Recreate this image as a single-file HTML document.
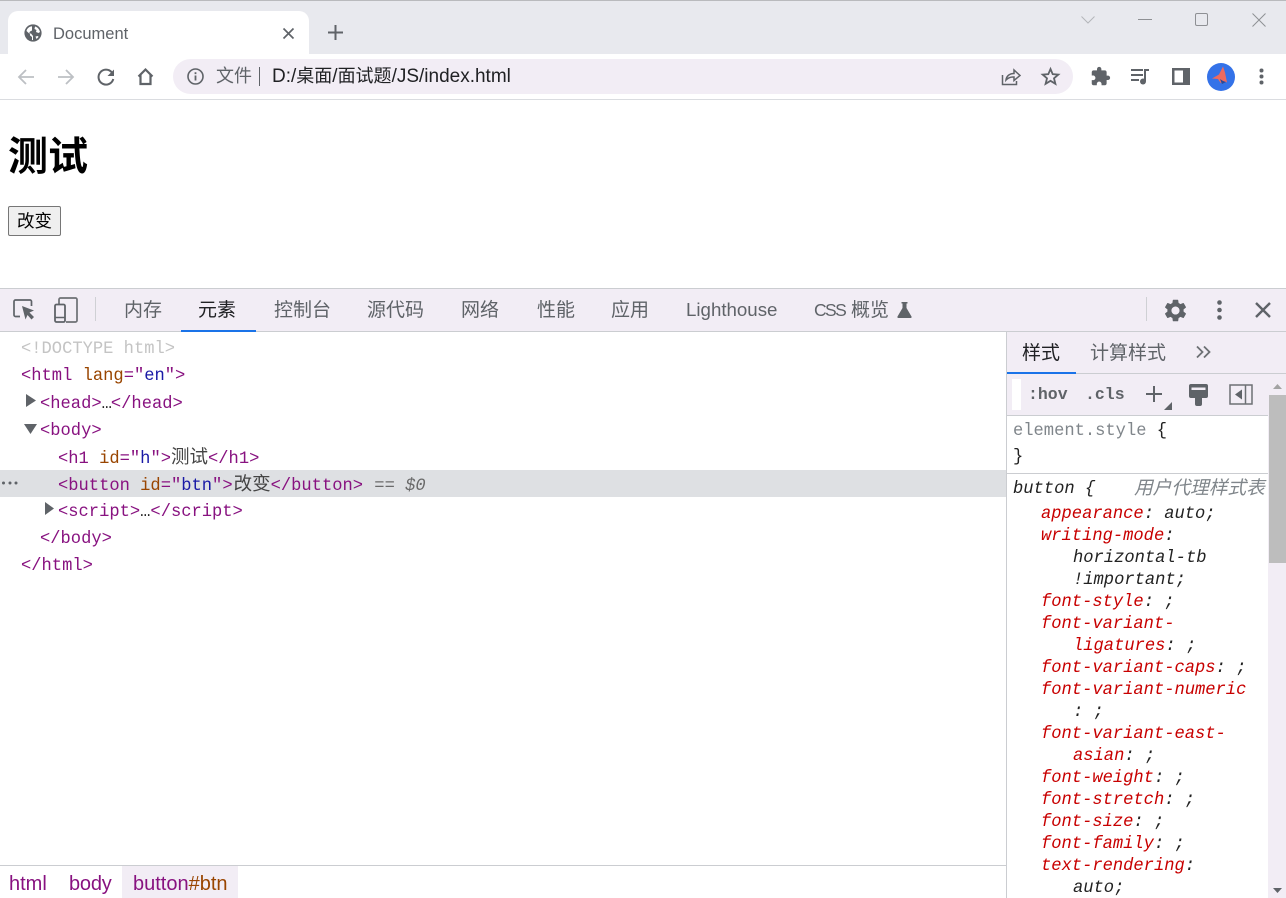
<!DOCTYPE html>
<html lang="zh"><head><meta charset="utf-8"><title>Document</title>
<style>
html,body{margin:0;padding:0;width:1286px;height:898px;overflow:hidden;background:#fff}
body{position:relative;font-family:"Liberation Sans","Noto Sans CJK SC",sans-serif}
.a{position:absolute;white-space:pre}
.m{font-family:"Liberation Mono","Noto Sans CJK SC",monospace;font-size:17.11px;line-height:27px;height:27px;color:#881280}
.m .c{font-size:18.5px;color:#444;margin-left:1px}
.m .e{color:#222;letter-spacing:-1px}
.s{font-family:"Liberation Mono","Noto Sans CJK SC",monospace;font-size:17.11px;line-height:22px;height:22px;color:#222;font-style:italic}
.n{color:#c80000}
.an{color:#994500}.av{color:#1a1aa6}
.t{font-size:19px;line-height:24px;color:#5f6368;top:299px}
.b{font-size:20px;line-height:23px;color:#881280;top:873px}
.u{font-size:18px}
svg{position:absolute;overflow:visible}
</style></head><body>

<div class="a" style="left:0;top:0;width:1286px;height:54px;background:#e8e9ee;border-top:1px solid #b9babd;box-sizing:border-box"></div>
<div class="a" style="left:8px;top:11px;width:301px;height:43px;background:#fff;border-radius:10px 10px 0 0"></div>
<svg style="left:24px;top:24px" width="18" height="18" viewBox="0 0 18 18"><circle cx="9" cy="9" r="8.6" fill="#5f6368"/><path d="M8 2.200C5 2.500 3 4.500 2.500 7l3.500 3.200v1.200l2 1.600V16c.5.1 1 .1 1 0v-4l-2-2.500H5l1-2 2-1zM11 2.500l-.5 2.500 2 1-.5 2 2.500 1 1.500-1C15.500 5.500 13.500 3 11 2.500zM11.500 12.500l1 2.500 2-2-.5-1z" fill="#fff"/></svg>
<div class="a" style="left:53px;top:24px;font-size:16.5px;line-height:20px;color:#5f6368">Document</div>
<svg style="left:283px;top:28px" width="11" height="11" viewBox="0 0 11 11"><path d="M.5.500l10 10M10.500.500l-10 10" stroke="#5f6368" stroke-width="1.700"/></svg>
<svg style="left:328px;top:25px" width="15" height="15" viewBox="0 0 15 15"><path d="M7.500 0v15M0 7.500h15" stroke="#5f6368" stroke-width="2"/></svg>

<svg style="left:1081px;top:15px" width="14" height="9" viewBox="0 0 14 9"><path d="M.5 1.500l6.500 6.500 6.500-6.500" fill="none" stroke="#b4b6ba" stroke-width="1"/></svg>
<div class="a" style="left:1138px;top:19px;width:14px;height:1px;background:#8e9094"></div>
<div class="a" style="left:1195px;top:13px;width:11px;height:11px;border:1px solid #8e9094;border-radius:2px"></div>
<svg style="left:1252px;top:13px" width="14" height="14" viewBox="0 0 14 14"><path d="M.5.500l13 13M13.500.500l-13 13" stroke="#8e9094" stroke-width="1"/></svg>

<div class="a" style="left:0;top:54px;width:1286px;height:45px;background:#fff"></div>
<div class="a" style="left:0;top:99px;width:1286px;height:1px;background:#dadce0"></div>
<svg style="left:17px;top:68px" width="18" height="18" viewBox="0 0 18 18"><path d="M17 9H2M9 2L2 9l7 7" fill="none" stroke="#bdc0c4" stroke-width="1.800"/></svg>
<svg style="left:57px;top:68px" width="18" height="18" viewBox="0 0 18 18"><path d="M1 9h15M9 2l7 7-7 7" fill="none" stroke="#bdc0c4" stroke-width="1.800"/></svg>
<svg style="left:97px;top:68px" width="18" height="18" viewBox="0 0 18 18"><path d="M14.800 4.300A7.500 7.500 0 1 0 16.300 11" fill="none" stroke="#5f6368" stroke-width="2"/><path d="M17 1.500V8h-6.500z" fill="#5f6368"/></svg>
<svg style="left:137px;top:68px" width="17" height="17" viewBox="0 0 17 17"><path d="M1.500 8.500L8.500 1.500l7 7M3.500 7v9h10V7" fill="none" stroke="#5f6368" stroke-width="2.200"/></svg>

<div class="a" style="left:173px;top:59px;width:900px;height:35px;border-radius:18px;background:#f2edf5"></div>
<svg style="left:187px;top:68px" width="17" height="17" viewBox="0 0 17 17"><circle cx="8.500" cy="8.500" r="7.500" fill="none" stroke="#5f6368" stroke-width="1.600"/><path d="M8.500 7.500v5M8.500 4.300v1.800" stroke="#5f6368" stroke-width="1.800"/></svg>
<div class="a" style="left:216px;top:64px;font-size:18px;line-height:25px;color:#5f6368">文件</div>
<div class="a" style="left:259px;top:67px;width:1px;height:19px;background:#5f6368"></div>
<div class="a" style="left:272px;top:64px;font-size:19px;line-height:25px;color:#202124">D:/<span class="u">桌面</span>/<span class="u">面试题</span>/JS/index.html</div>
<svg style="left:1001px;top:67px" width="20" height="19" viewBox="0 0 20 19"><path d="M1.500 8v9.500h14V14" fill="none" stroke="#5f6368" stroke-width="1.500"/><path d="M5 13c.5-4 3.500-6.500 8-6.500V3l6 5.500-6 5V10c-3.500-.3-6 .8-8 3z" fill="none" stroke="#5f6368" stroke-width="1.500"/></svg>
<svg style="left:1041px;top:67px" width="19" height="19" viewBox="0 0 19 19"><path d="M9.500 2l2.200 5.200 5.600.4-4.300 3.700 1.400 5.500-4.900-3-4.900 3 1.400-5.500-4.300-3.700 5.600-.4z" fill="none" stroke="#5f6368" stroke-width="1.800"/></svg>
<svg style="left:1090px;top:66px" width="21" height="21" viewBox="0 0 24 24"><path d="M20.500 11H19V7c0-1.100-.9-2-2-2h-4V3.500C13 2.120 11.880 1 10.500 1S8 2.120 8 3.500V5H4c-1.100 0-1.990.9-1.990 2v3.800H3.500c1.490 0 2.700 1.210 2.700 2.700s-1.210 2.700-2.700 2.700H2V20c0 1.100.9 2 2 2h3.800v-1.500c0-1.490 1.210-2.700 2.700-2.700 1.490 0 2.700 1.210 2.700 2.700V22H17c1.100 0 2-.9 2-2v-4h1.500c1.380 0 2.500-1.120 2.500-2.500S21.880 11 20.500 11z" fill="#5f6368"/></svg>
<svg style="left:1130px;top:68px" width="20" height="17" viewBox="0 0 20 17"><path d="M1 2h12M1 7h12M1 12h8" stroke="#5f6368" stroke-width="2"/><path d="M15 13V2h4" fill="none" stroke="#5f6368" stroke-width="2"/><circle cx="13" cy="13.500" r="3" fill="#5f6368"/></svg>
<svg style="left:1172px;top:68px" width="18" height="17" viewBox="0 0 18 17"><path d="M0 0h18v17H0zM2.500 2.500v12H11v-12z" fill="#5f6368" fill-rule="evenodd"/></svg>
<svg style="left:1207px;top:63px" width="28" height="28" viewBox="0 0 28 28"><circle cx="14" cy="14" r="14" fill="#3472e8"/><path d="M16 3.500l2 6 2 10-5-2-1 3-3-4.500-6-.5 7-4z" fill="#ee6a5e"/><path d="M13 16l2 5 4-2-3-1z" fill="#2a4a98"/></svg>
<svg style="left:1259px;top:68px" width="5" height="17" viewBox="0 0 5 17"><circle cx="2.500" cy="2.500" r="2" fill="#5f6368"/><circle cx="2.500" cy="8.500" r="2" fill="#5f6368"/><circle cx="2.500" cy="14.500" r="2" fill="#5f6368"/></svg>

<div class="a" style="left:8px;top:132px;font-size:40px;line-height:50px;font-weight:700;color:#000">测试</div>
<div class="a" style="left:8px;top:206px;width:53px;height:30px;box-sizing:border-box;background:#efefef;border:1px solid #767676;border-radius:2px;font-size:17.5px;line-height:29px;text-align:center;color:#000">改变</div>

<div class="a" style="left:0;top:288px;width:1286px;height:44px;background:#f2edf5;border-top:1px solid #cbcdd1;border-bottom:1px solid #cbcdd1;box-sizing:border-box"></div>
<svg style="left:13px;top:299px" width="22" height="22" viewBox="0 0 22 22"><path d="M7 17.500H2.500a1.500 1.500 0 0 1-1.500-1.500V2.500A1.500 1.500 0 0 1 2.500 1H17a1.500 1.500 0 0 1 1.500 1.500V7" fill="none" stroke="#5f6368" stroke-width="1.700"/><path d="M9 7l12 4.500-4.500 2L21 18l-2.500 2.500-4-4.500-2 4.500z" fill="#5f6368"/></svg>
<svg style="left:54px;top:297px" width="24" height="26" viewBox="0 0 24 26"><path d="M5 7V2.500A1.500 1.500 0 0 1 6.500 1h15A1.500 1.500 0 0 1 23 2.500v21a1.500 1.500 0 0 1-1.500 1.500H12" fill="none" stroke="#6d7074" stroke-width="1.700"/><rect x="1" y="7.500" width="10" height="17.500" rx="1.500" fill="none" stroke="#5f6368" stroke-width="1.800"/><path d="M1 20.500h10" stroke="#5f6368" stroke-width="1.500"/></svg>
<div class="a" style="left:95px;top:297px;width:1px;height:24px;background:#cfd0d4"></div>
<div class="a t" style="left:124px">内存</div>
<div class="a t" style="left:198px;color:#202124">元素</div>
<div class="a" style="left:181px;top:330px;width:75px;height:2px;background:#1a73e8"></div>
<div class="a t" style="left:274px">控制台</div>
<div class="a t" style="left:367px">源代码</div>
<div class="a t" style="left:461px">网络</div>
<div class="a t" style="left:537px">性能</div>
<div class="a t" style="left:611px">应用</div>
<div class="a t" style="left:686px;top:298px;font-size:18.7px">Lighthouse</div>
<div class="a t" style="left:814px;top:298px;font-size:17.5px;letter-spacing:-1.6px">CSS</div>
<div class="a t" style="left:851px">概览</div>
<svg style="left:897px;top:302px" width="15" height="16" viewBox="0 0 15 16"><path d="M4.500 0h6v1.500H9.500v4.500l5 8.500c.4.800 0 1.500-1 1.500H1.500c-1 0-1.400-.7-1-1.500l5-8.500V1.500h-1z" fill="#5f6368"/></svg>
<div class="a" style="left:1146px;top:297px;width:1px;height:24px;background:#cfd0d4"></div>
<svg style="left:1162px;top:297px" width="27" height="27" viewBox="0 0 24 24"><path fill="#5f6368" d="M19.140 12.940c.04-.3.06-.61.06-.94 0-.32-.02-.64-.07-.94l2.030-1.580c.18-.14.23-.41.12-.61l-1.920-3.320c-.12-.22-.37-.29-.59-.22l-2.390.96c-.5-.38-1.030-.7-1.620-.94l-.36-2.540c-.04-.24-.24-.41-.48-.41h-3.840c-.24 0-.43.17-.47.41l-.36 2.540c-.59.24-1.130.57-1.620.94l-2.390-.96c-.22-.08-.47 0-.59.22L2.740 8.870c-.12.21-.08.47.12.61l2.030 1.580c-.05.3-.09.63-.09.94s.02.64.07.94l-2.030 1.580c-.18.14-.23.41-.12.61l1.920 3.320c.12.22.37.29.59.22l2.390-.96c.5.38 1.030.7 1.620.94l.36 2.540c.05.24.24.41.48.41h3.840c.24 0 .44-.17.47-.41l.36-2.540c.59-.24 1.130-.56 1.620-.94l2.390.96c.22.08.47 0 .59-.22l1.920-3.320c.12-.22.07-.47-.12-.61l-2.010-1.580zM12 15.600c-1.980 0-3.600-1.620-3.600-3.600s1.620-3.600 3.600-3.600 3.600 1.620 3.600 3.600-1.620 3.600-3.600 3.600z"/></svg>
<svg style="left:1217px;top:300px" width="5" height="20" viewBox="0 0 5 20"><circle cx="2.500" cy="2.500" r="2.300" fill="#5f6368"/><circle cx="2.500" cy="10" r="2.300" fill="#5f6368"/><circle cx="2.500" cy="17.500" r="2.300" fill="#5f6368"/></svg>
<svg style="left:1255px;top:302px" width="16" height="16" viewBox="0 0 16 16"><path d="M1 1l14 14M15 1L1 15" stroke="#5f6368" stroke-width="2.400"/></svg>

<div class="a" style="left:0;top:470px;width:1006px;height:27px;background:#dee0e3"></div>
<svg style="left:0;top:480px" width="20" height="6" viewBox="0 0 20 6"><circle cx="3.500" cy="3" r="1.500" fill="#5f6368"/><circle cx="10" cy="3" r="1.500" fill="#5f6368"/><circle cx="16" cy="3" r="1.500" fill="#5f6368"/></svg>
<div class="a m" style="left:21px;top:336px;color:#c4c4c4">&lt;!DOCTYPE html&gt;</div>
<div class="a m" style="left:21px;top:363px">&lt;html <span class="an">lang</span>="<span class="av">en</span>"&gt;</div>
<svg style="left:26px;top:394px" width="10" height="13" viewBox="0 0 10 13"><path d="M0 0l10 6.500L0 13z" fill="#5f6368"/></svg>
<div class="a m" style="left:40px;top:391px">&lt;head&gt;<span class="e">…</span>&lt;/head&gt;</div>
<svg style="left:24px;top:424px" width="13" height="10" viewBox="0 0 13 10"><path d="M0 0h13L6.500 10z" fill="#5f6368"/></svg>
<div class="a m" style="left:40px;top:418px">&lt;body&gt;</div>
<div class="a m" style="left:58px;top:445px">&lt;h1 <span class="an">id</span>="<span class="av">h</span>"&gt;<span class="c" style="margin-left:0">测试</span>&lt;/h1&gt;</div>
<div class="a m" style="left:58px;top:472px">&lt;button <span class="an">id</span>="<span class="av">btn</span>"&gt;<span class="c">改变</span>&lt;/button&gt; <span style="color:#6a6a6a;font-style:italic;margin-left:1px">== $0</span></div>
<svg style="left:45px;top:502px" width="9" height="13" viewBox="0 0 9 13"><path d="M0 0l9 6.500L0 13z" fill="#5f6368"/></svg>
<div class="a m" style="left:58px;top:499px">&lt;script&gt;<span class="e" style="letter-spacing:0">…</span>&lt;/script&gt;</div>
<div class="a m" style="left:40px;top:526px">&lt;/body&gt;</div>
<div class="a m" style="left:21px;top:553px">&lt;/html&gt;</div>

<div class="a" style="left:0;top:865px;width:1006px;height:1px;background:#cbcdd1"></div>
<div class="a" style="left:122px;top:866px;width:116px;height:32px;background:#f2edf5"></div>
<div class="a b" style="left:9px">html</div>
<div class="a b" style="left:69px;letter-spacing:-.2px">body</div>
<div class="a b" style="left:133px">button<span style="color:#994500">#btn</span></div>

<div class="a" style="left:1006px;top:332px;width:1px;height:566px;background:#cbcdd1"></div>
<div class="a" style="left:1007px;top:332px;width:279px;height:42px;background:#f2edf5;border-bottom:1px solid #cbcdd1;box-sizing:border-box"></div>
<div class="a" style="left:1022px;top:342px;font-size:19px;line-height:24px;color:#202124">样式</div>
<div class="a" style="left:1090px;top:342px;font-size:19px;line-height:24px;color:#5f6368">计算样式</div>
<div class="a" style="left:1007px;top:372px;width:69px;height:2px;background:#1a73e8"></div>
<svg style="left:1196px;top:346px" width="15" height="12" viewBox="0 0 15 12"><path d="M1 .500L6.500 6 1 11.500M8 .500L13.500 6 8 11.500" fill="none" stroke="#6d7074" stroke-width="1.800"/></svg>

<div class="a" style="left:1007px;top:374px;width:261px;height:42px;background:#f2edf5;border-bottom:1px solid #cbcdd1;box-sizing:border-box"></div>
<div class="a" style="left:1012px;top:379px;width:9px;height:31px;background:#fff"></div>
<div class="a" style="left:1028px;top:384px;font-family:'Liberation Mono',monospace;font-size:16.5px;line-height:22px;font-weight:700;color:#5f6368">:hov</div>
<div class="a" style="left:1085px;top:384px;font-family:'Liberation Mono',monospace;font-size:16.5px;line-height:22px;font-weight:700;color:#5f6368">.cls</div>
<svg style="left:1146px;top:386px" width="16" height="16" viewBox="0 0 16 16"><path d="M8 0v16M0 8h16" stroke="#5f6368" stroke-width="2"/></svg>
<svg style="left:1164px;top:402px" width="8" height="8" viewBox="0 0 8 8"><path d="M8 0v8H0z" fill="#5f6368"/></svg>
<svg style="left:1189px;top:384px" width="19" height="22" viewBox="0 0 19 22"><path d="M2 0h15a2 2 0 0 1 2 2v10a2 2 0 0 1-2 2h-4v6a2 2 0 0 1-2 2H8a2 2 0 0 1-2-2v-6H2a2 2 0 0 1-2-2V2a2 2 0 0 1 2-2z" fill="#5f6368"/><path d="M2.500 3.500h14v2.500h-14z" fill="#f2edf5"/></svg>
<svg style="left:1229px;top:384px" width="24" height="21" viewBox="0 0 24 21"><rect x="1" y="1" width="22" height="19" fill="none" stroke="#6d7074" stroke-width="1.500"/><path d="M16.500 1v19" stroke="#6d7074" stroke-width="1.500"/><path d="M13 5.500v10l-7-5z" fill="#5f6368"/></svg>

<div class="a s" style="left:1013px;top:421px;font-style:normal;color:#80868b">element.style <span style="color:#222">{</span></div>
<div class="a s" style="left:1013px;top:447px;font-style:normal">}</div>
<div class="a" style="left:1007px;top:473px;width:261px;height:1px;background:#cbcdd1"></div>
<div class="a s" style="left:1013px;top:479px">button {</div>
<div class="a" style="left:1134px;top:476px;font-size:18.7px;line-height:24px;font-style:italic;color:#80868b">用户代理样式表</div>
<div class="a s n" style="left:1041px;top:504px">appearance<span style="color:#222">: auto;</span></div>
<div class="a s n" style="left:1041px;top:526px">writing-mode<span style="color:#222">:</span></div>
<div class="a s" style="left:1073px;top:548px">horizontal-tb</div>
<div class="a s" style="left:1073px;top:570px">!important;</div>
<div class="a s n" style="left:1041px;top:592px">font-style<span style="color:#222">: ;</span></div>
<div class="a s n" style="left:1041px;top:614px">font-variant-</div>
<div class="a s n" style="left:1073px;top:636px">ligatures<span style="color:#222">: ;</span></div>
<div class="a s n" style="left:1041px;top:658px">font-variant-caps<span style="color:#222">: ;</span></div>
<div class="a s n" style="left:1041px;top:680px">font-variant-numeric</div>
<div class="a s" style="left:1073px;top:702px">: ;</div>
<div class="a s n" style="left:1041px;top:724px">font-variant-east-</div>
<div class="a s n" style="left:1073px;top:746px">asian<span style="color:#222">: ;</span></div>
<div class="a s n" style="left:1041px;top:768px">font-weight<span style="color:#222">: ;</span></div>
<div class="a s n" style="left:1041px;top:790px">font-stretch<span style="color:#222">: ;</span></div>
<div class="a s n" style="left:1041px;top:812px">font-size<span style="color:#222">: ;</span></div>
<div class="a s n" style="left:1041px;top:834px">font-family<span style="color:#222">: ;</span></div>
<div class="a s n" style="left:1041px;top:856px">text-rendering<span style="color:#222">:</span></div>
<div class="a s" style="left:1073px;top:878px">auto;</div>

<div class="a" style="left:1268px;top:374px;width:18px;height:524px;background:#f2edf5"></div>
<div class="a" style="left:1269px;top:395px;width:17px;height:168px;background:#bdbdbd"></div>
<svg style="left:1273px;top:384px" width="9" height="5" viewBox="0 0 9 5"><path d="M4.500 0L9 5H0z" fill="#a3a3a3"/></svg>
<svg style="left:1273px;top:888px" width="9" height="5" viewBox="0 0 9 5"><path d="M0 0h9L4.500 5z" fill="#5f6368"/></svg>
</body></html>
